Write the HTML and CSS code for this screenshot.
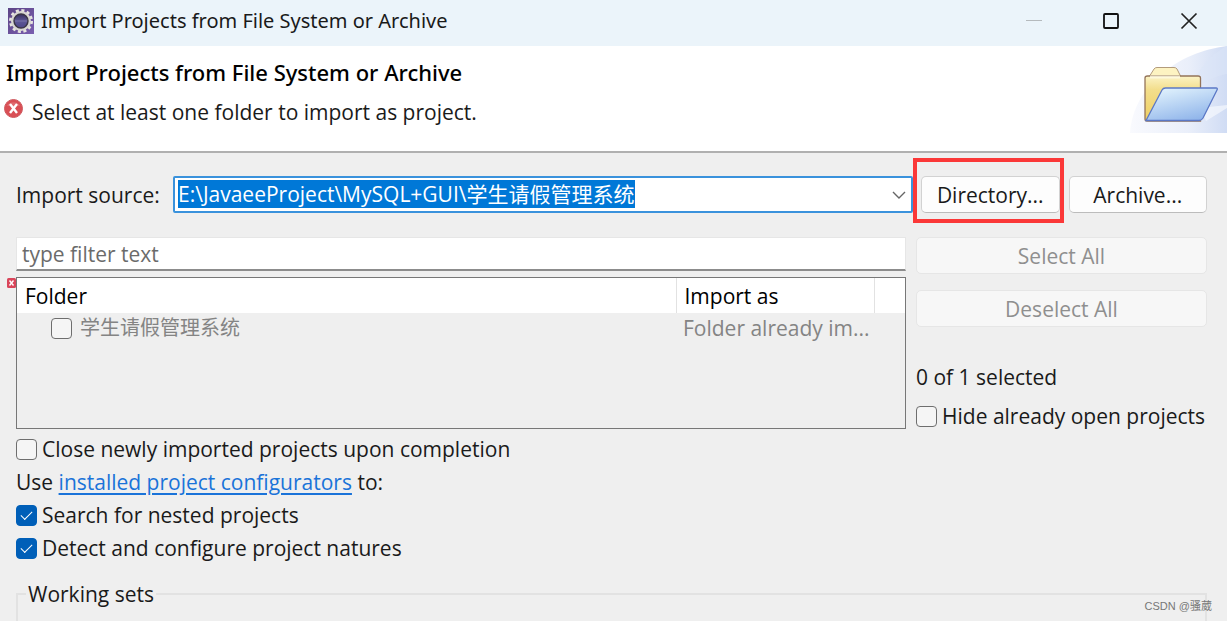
FILE: index.html
```html
<!DOCTYPE html>
<html lang="en">
  <head>
    <meta charset="UTF-8" />
    <meta name="viewport" content="width=device-width, initial-scale=1.0" />
    <title>Import Projects from File System or Archive</title>
    <link rel="stylesheet" href="styles.css">
  </head>
  <body>
    <header class="titlebar">
      <svg class="app-icon" viewBox="0 0 26 26" aria-hidden="true">
        <defs>
          <linearGradient id="purple" x1="0" y1="0" x2="1" y2="1">
            <stop offset="0" stop-color="#5c4586" />
            <stop offset="1" stop-color="#7a5fb0" />
          </linearGradient>
          <linearGradient id="core" x1="0" y1="0" x2="0" y2="1">
            <stop offset="0" stop-color="#2c2550" />
            <stop offset="0.5" stop-color="#5d5796" />
            <stop offset="1" stop-color="#4b4285" />
          </linearGradient>
        </defs>
        <rect width="26" height="26" fill="url(#purple)" />
        <circle cx="13" cy="13" r="10.5" fill="none" stroke="#e6e4e0" stroke-width="3" stroke-dasharray="3 2.5" />
        <circle cx="13" cy="13" r="8.5" fill="url(#core)" stroke="#d8d6d2" stroke-width="3" />
        <circle cx="13" cy="13" r="7" fill="none" stroke="#3a3545" stroke-width="1.4" />
        <path d="M7 13h12" stroke="#827bb0" stroke-width="0.8" />
      </svg>
      <span class="title">Import Projects from File System or Archive</span>
      <div class="window-buttons">
        <button type="button" aria-label="Minimize" disabled>
          <svg viewBox="0 0 18 18"><path d="M2 8.5h16" stroke="#b5babd" stroke-width="1" /></svg>
        </button>
        <button type="button" aria-label="Maximize">
          <svg viewBox="0 0 18 18"><rect x="2" y="2" width="14" height="14" rx="1" fill="none" stroke="#111" stroke-width="1.8" /></svg>
        </button>
        <button type="button" aria-label="Close">
          <svg viewBox="0 0 18 18"><path d="M1.5 1.5l15 15M16.5 1.5l-15 15" stroke="#222" stroke-width="1.7" /></svg>
        </button>
      </div>
    </header>

    <section class="banner">
      <div>
        <h1>Import Projects from File System or Archive</h1>
        <p class="message">
          <svg class="error-icon" viewBox="0 0 20 20" aria-hidden="true">
            <circle cx="9.500" cy="10.500" r="9" fill="#d94f55" stroke="#cf5a60" />
            <path d="M3 8a7 6 0 0 1 13 0z" fill="#e88589" opacity="0.5" />
            <path d="M6 6l7 9M13 6l-7 9" stroke="#fff" stroke-width="2.4" />
          </svg>
          Select at least one folder to import as project.
        </p>
      </div>
      <svg class="folder-icon" viewBox="0 0 97 87" aria-hidden="true">
        <defs>
          <linearGradient id="glow" x1="0" y1="0" x2="1" y2="0">
            <stop offset="0" stop-color="#f9fafe" />
            <stop offset="0.6" stop-color="#eaeffa" />
            <stop offset="1" stop-color="#d0dcf4" />
          </linearGradient>
          <linearGradient id="yellow" x1="0" y1="0" x2="0" y2="1">
            <stop offset="0" stop-color="#fbf3c6" />
            <stop offset="0.3" stop-color="#f3de8c" />
            <stop offset="1" stop-color="#eecf62" />
          </linearGradient>
          <linearGradient id="blue" x1="0.2" y1="0" x2="0.7" y2="1">
            <stop offset="0" stop-color="#e2f3fd" />
            <stop offset="1" stop-color="#8fb4ea" />
          </linearGradient>
        </defs>
        <path d="M0 87C3 40 48 6 97 0v87z" fill="url(#glow)" />
        <path d="M97 0v28C85 30 70 38 60 46 66 26 80 8 97 0z" fill="#dce5f7" opacity="0.5" />
        <path d="M70 62l27-3v3L76 75z" fill="#f5f8fd" opacity="0.7" />
        <path d="M19 31l5-8q1-1.500 3-1.500h17q2 0 3 1.500l4 8z" fill="#fdf3c2" stroke="#b39b7c" />
        <path d="M15 73V32q0-2 2.500-2h50.500q2.500 0 2.500 2v43H17q-2 0-2-2z" fill="url(#yellow)" stroke="#94745a" stroke-width="1.300" />
        <path d="M20 31h30" stroke="#fffbe3" stroke-width="3" opacity="0.8" />
        <path d="M16 74.500L32 44q1-2 3.500-2H86q2 0 1 2L73 72q-1.500 2.500-4 2.500z" fill="url(#blue)" stroke="#5b78c6" stroke-width="1.300" />
      </svg>
    </section>

    <main>
      <div class="source">
        <label for="source">Import source:</label>
        <div class="combo">
          <input type="text" id="source" value="E:\JavaeeProject\MySQL+GUI\学生请假管理系统" spellcheck="false" autocomplete="off" />
          <button type="button" class="arrow" aria-label="Show previous sources">
            <svg viewBox="0 0 14 8"><path d="M1 1l6 6 6-6" fill="none" stroke="#666" stroke-width="1.400" /></svg>
          </button>
        </div>
        <div class="source-buttons">
          <div class="marked"><button type="button" class="btn">Directory...</button></div>
          <button type="button" class="btn">Archive...</button>
        </div>
      </div>

      <div class="projects">
        <div class="list">
          <input type="text" class="filter" placeholder="type filter text" aria-label="type filter text" />
          <div class="tree">
            <svg class="decorator" viewBox="0 0 9 10" aria-hidden="true">
              <rect width="9" height="10" rx="1.500" fill="#d9455a" />
              <path d="M2.500 2.500l4 5M6.500 2.500l-4 5" stroke="#fff" stroke-width="1.400" />
            </svg>
            <table>
              <thead>
                <tr>
                  <th class="col-folder">Folder</th>
                  <th class="col-import">Import as</th>
                  <th></th>
                </tr>
              </thead>
              <tbody>
                <tr>
                  <td><label class="check project"><input type="checkbox" />学生请假管理系统</label></td>
                  <td>Folder already im...</td>
                  <td></td>
                </tr>
              </tbody>
            </table>
          </div>
        </div>
        <div class="side">
          <button type="button" class="btn" disabled>Select All</button>
          <button type="button" class="btn" disabled>Deselect All</button>
          <p class="count">0 of 1 selected</p>
          <label class="check"><input type="checkbox" />Hide already open projects</label>
        </div>
      </div>

      <div class="options">
        <label class="check"><input type="checkbox" />Close newly imported projects upon completion</label>
        <p>Use <a href="#">installed project configurators</a> to:</p>
        <label class="check"><input type="checkbox" checked />Search for nested projects</label>
        <label class="check"><input type="checkbox" checked />Detect and configure project natures</label>
      </div>

      <fieldset>
        <legend>Working sets</legend>
      </fieldset>
    </main>
    <span class="watermark">CSDN @骚葳</span>

    <script>
      // the path starts out selected, ready to be typed over
      let source = document.getElementById("source");
      source.focus();
      source.select();
    </script>
  </body>
</html>
```

FILE: styles.css
```css
* {
  box-sizing: border-box;
}
body {
  display: flex;
  flex-direction: column;
  margin: 0;
  min-height: 100vh;
  position: relative;
  background-color: #efefef;
  color: #1a1a1a;
  font-family: "Open Sans", "Noto Sans CJK SC", sans-serif;
  font-size: 21px;
  line-height: 28px;
}
h1,
p {
  margin: 0;
}
input,
button {
  font: inherit;
  color: inherit;
}
svg {
  display: block;
}

/* title bar */
.titlebar {
  display: flex;
  align-items: center;
  height: 46px;
  padding: 0 8px 4px;
  background-color: #ebf4fa;
}
.app-icon {
  width: 26px;
  height: 26px;
  margin-right: 7px;
}
.title {
  font-family: "Noto Sans", sans-serif;
  font-size: 20px;
}
.window-buttons {
  display: flex;
  gap: 18px;
  margin-left: auto;
}
.window-buttons button {
  width: 60px;
  padding: 0 21px;
  border: 0;
  background: none;
}
.window-buttons svg {
  width: 18px;
  height: 18px;
}

/* banner */
.banner {
  display: flex;
  justify-content: space-between;
  height: 107px;
  padding-left: 6px;
  background-color: #fff;
  border-bottom: 2px solid #b0b0b0;
}
h1 {
  margin-top: 12px;
  font-family: "Noto Sans", sans-serif;
  font-size: 22px;
  font-weight: 500;
  color: #000;
}
.message {
  display: flex;
  margin: 12px 0 0 -2px;
}
.error-icon {
  width: 20px;
  height: 20px;
  margin-right: 8px;
}
.folder-icon {
  width: 97px;
  height: 87px;
}

main {
  display: flex;
  flex-direction: column;
  flex: 1;
  padding: 23px 20px 0 16px;
}
.source {
  display: flex;
  align-items: center;
}
.source label {
  width: 157px;
}
.combo {
  display: flex;
  flex: 1;
  height: 37px;
  background-color: #fff;
  border: 2px solid #3a92dc;
  border-radius: 2px;
}
.combo input {
  flex: 1;
  min-width: 0;
  padding: 0 3px 2px;
  border: 0;
  outline: 0;
  background: none;
}
.combo input::selection {
  background-color: #0078d7;
  color: #fff;
}
.arrow {
  padding: 0 5px;
  border: 0;
  background: none;
}
.arrow svg {
  width: 14px;
  height: 8px;
}
.source-buttons {
  display: grid;
  grid-template-columns: 1fr 1fr;
  gap: 9px;
  width: 286px;
  margin-left: 8px;
}
.btn {
  width: 100%;
  height: 37px;
  padding: 0;
  background-color: #fdfdfd;
  border: 1px solid #d2d2d2;
  border-bottom-color: #bcbcbc;
  border-radius: 5px;
}
.btn:disabled {
  color: #8f8f8f;
  background-color: #f7f7f7;
  border-color: #e6e6e6;
}
.marked {
  position: relative;
}
/* red frame round the Directory button */
.marked::after {
  content: "";
  position: absolute;
  inset: -18px -4px -10px -8px;
  border: 4px solid #fb3838;
  pointer-events: none;
}

.projects {
  display: grid;
  grid-template-columns: 1fr 291px;
  gap: 10px;
  margin-top: 24px;
}
.filter {
  display: block;
  width: 100%;
  height: 34px;
  padding: 0 5px;
  border: 1px solid #e6e6e6;
  border-bottom: 2px solid #8c8c8c;
  background-color: #fff;
}
.filter::placeholder {
  color: #6b6b6b;
}
.tree {
  position: relative;
  height: 152px;
  margin-top: 6px;
  border: 1px solid #777;
}
.decorator {
  position: absolute;
  top: 0;
  left: -10px;
  width: 9px;
  height: 10px;
}
table {
  width: 100%;
  table-layout: fixed;
  border-collapse: collapse;
}
th {
  height: 35px;
  padding: 0 8px;
  background-color: #fff;
  border-right: 1px solid #e2e2e2;
  font-weight: normal;
  text-align: left;
  color: #000;
}
th:last-child {
  width: 31px;
  border-right: 0;
}
.col-import {
  width: 198px;
}
td {
  padding: 1px 7px 0;
  color: #848484;
  white-space: nowrap;
}

.check {
  display: flex;
  align-items: center;
  gap: 5px;
}
.check input {
  appearance: none;
  flex: none;
  width: 21px;
  height: 21px;
  margin: 0;
  border: 1px solid #6e6e6e;
  border-radius: 4px;
  background-color: #f5f5f5;
}
.check input:checked {
  display: grid;
  place-items: center;
  border-color: #005fb8;
  background-color: #005fb8;
}
/* tick made of two borders */
.check input:checked::before {
  content: "";
  width: 10px;
  height: 5px;
  margin-bottom: 3px;
  border-left: 1px solid #fff;
  border-bottom: 1px solid #fff;
  transform: rotate(-45deg);
}
.project {
  padding-left: 27px;
  gap: 8px;
  font-size: 20px;
}

.side .btn {
  display: block;
  margin-bottom: 16px;
}
.count {
  margin-top: 36px;
}
.side .check {
  margin-top: 11px;
}
.options {
  display: flex;
  flex-direction: column;
  gap: 5px;
  margin-top: 5px;
}
a {
  color: #1a73d9;
  text-decoration: underline;
  text-underline-offset: 3px;
}
fieldset {
  flex: 1;
  margin: 18px 0 0;
  padding: 0 8px;
  border: 2px solid #e2e2e2;
  border-bottom: 0;
}
legend {
  padding: 0 2px;
}
.watermark {
  position: absolute;
  right: 15px;
  bottom: 7px;
  font: 11px/16px "Liberation Sans", "Noto Sans CJK SC", sans-serif;
  color: #777;
}
```
